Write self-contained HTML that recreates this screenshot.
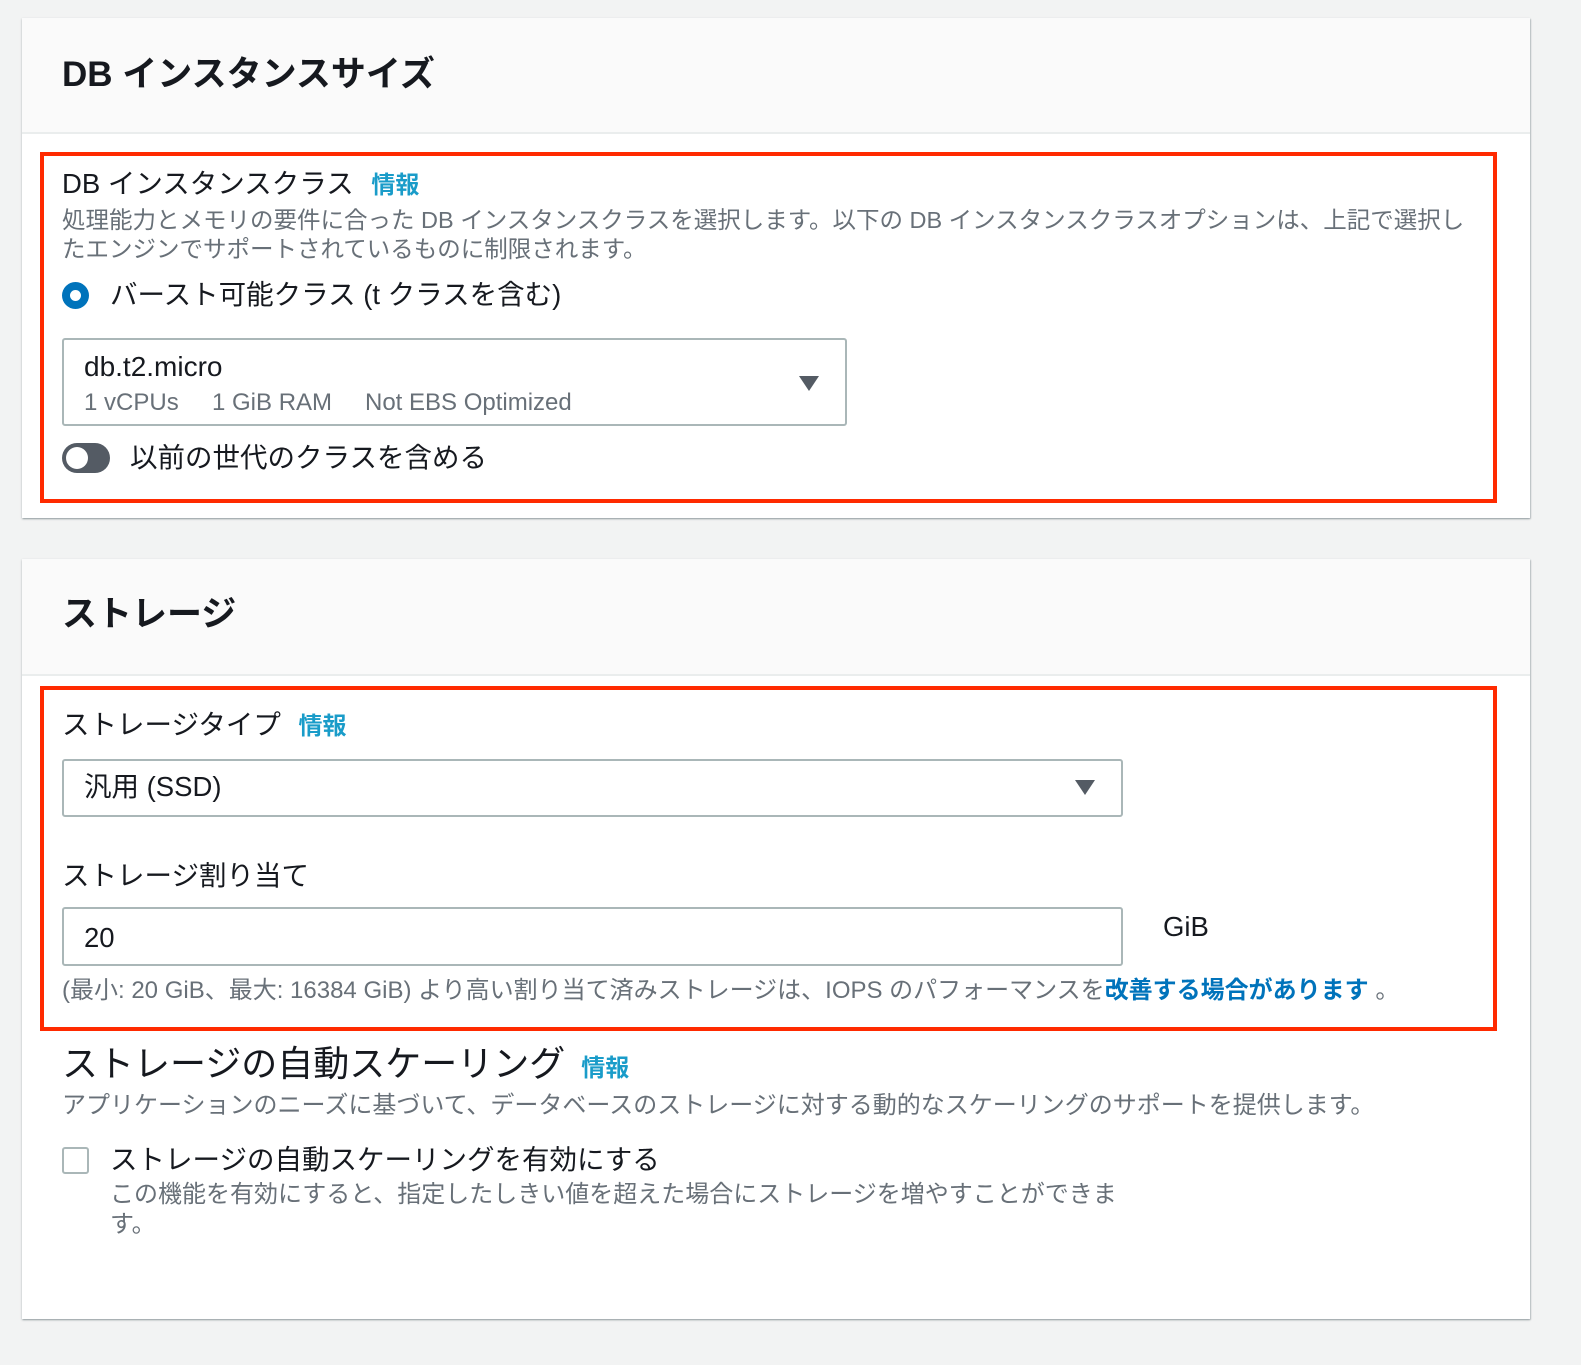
<!DOCTYPE html>
<html><head><meta charset="utf-8"><style>
*{margin:0;padding:0;box-sizing:border-box}
body{width:1581px;height:1365px;background:#f2f3f3;position:relative;overflow:hidden;font-family:"Liberation Sans","Noto Sans CJK JP",sans-serif;color:#16191f}
.abs{position:absolute;white-space:nowrap}
.panel{position:absolute;left:22px;width:1508px;background:#fff;box-shadow:0 1px 2px rgba(0,28,36,.3),1px 1px 1px rgba(0,28,36,.15)}
.hdr{position:absolute;left:0;top:0;width:100%;background:#fafafa;border-bottom:2px solid #eaeded}
.red{position:absolute;border:4px solid #ff2a00}
.h1{font-size:35px;font-weight:bold;line-height:40px}
.lbl{font-size:27.5px;line-height:32px}
.desc{font-size:24px;line-height:29px;color:#687078}
.info{color:#1a9cc9;font-weight:bold;font-size:24px}
.box{position:absolute;border:2px solid #aab7b8;border-radius:3px;background:#fff}
.tri{position:absolute;width:0;height:0;border-left:10px solid transparent;border-right:10px solid transparent;border-top:15px solid #545b64}
</style></head><body>

<div class="panel" style="top:18px;height:500px">
  <div class="hdr" style="height:116px"></div>
</div>
<div class="abs h1" style="left:62px;top:55px">DB インスタンスサイズ</div>
<div class="red" style="left:40px;top:152px;width:1457px;height:351px"></div>
<div class="abs lbl" style="left:62px;top:168px">DB インスタンスクラス <span class="info" style="margin-left:10px">情報</span></div>
<div class="abs desc" style="left:62px;top:206px;font-size:23.5px">処理能力とメモリの要件に合った DB インスタンスクラスを選択します。以下の DB インスタンスクラスオプションは、上記で選択し</div>
<div class="abs desc" style="left:62px;top:235px;font-size:23.5px">たエンジンでサポートされているものに制限されます。</div>
<div class="abs" style="left:62px;top:282px;width:27px;height:27px;border-radius:50%;background:#0073bb"></div>
<div class="abs" style="left:70px;top:290px;width:11px;height:11px;border-radius:50%;background:#fff"></div>
<div class="abs lbl" style="left:110px;top:279px">バースト可能クラス (t クラスを含む)</div>
<div class="box" style="left:62px;top:338px;width:785px;height:88px"></div>
<div class="abs" style="left:84px;top:351px;font-size:28px;line-height:32px">db.t2.micro</div>
<div class="abs desc" style="left:84px;top:388px">1 vCPUs</div>
<div class="abs desc" style="left:212px;top:388px">1 GiB RAM</div>
<div class="abs desc" style="left:365px;top:388px">Not EBS Optimized</div>
<div class="tri" style="left:799px;top:376px"></div>
<div class="abs" style="left:62px;top:443px;width:48px;height:30px;border-radius:15px;background:#545b64"></div>
<div class="abs" style="left:66px;top:447px;width:22px;height:22px;border-radius:50%;background:#fff"></div>
<div class="abs lbl" style="left:130px;top:442px">以前の世代のクラスを含める</div>

<div class="panel" style="top:559px;height:760px">
  <div class="hdr" style="height:117px"></div>
</div>
<div class="abs h1" style="left:62px;top:595px">ストレージ</div>
<div class="red" style="left:40px;top:686px;width:1457px;height:345px"></div>
<div class="abs lbl" style="left:62px;top:709px">ストレージタイプ <span class="info" style="margin-left:10px">情報</span></div>
<div class="box" style="left:62px;top:759px;width:1061px;height:58px"></div>
<div class="abs lbl" style="left:84px;top:771px">汎用 (SSD)</div>
<div class="tri" style="left:1075px;top:780px"></div>
<div class="abs lbl" style="left:62px;top:860px">ストレージ割り当て</div>
<div class="box" style="left:62px;top:907px;width:1061px;height:59px"></div>
<div class="abs lbl" style="left:84px;top:922px">20</div>
<div class="abs lbl" style="left:1163px;top:911px">GiB</div>
<div class="abs desc" style="left:62px;top:976px">(最小: 20 GiB、最大: 16384 GiB) より高い割り当て済みストレージは、IOPS のパフォーマンスを<span style="color:#0073bb;font-weight:bold">改善する場合があります</span> 。</div>

<div class="abs" style="left:62px;top:1043px;font-size:36px;line-height:42px">ストレージの自動スケーリング <span class="info" style="margin-left:6px">情報</span></div>
<div class="abs desc" style="left:62px;top:1091px">アプリケーションのニーズに基づいて、データベースのストレージに対する動的なスケーリングのサポートを提供します。</div>
<div class="abs" style="left:62px;top:1147px;width:27px;height:27px;border:2px solid #aab7b8;border-radius:3px"></div>
<div class="abs lbl" style="left:110px;top:1144px">ストレージの自動スケーリングを有効にする</div>
<div class="abs desc" style="left:110px;top:1180px">この機能を有効にすると、指定したしきい値を超えた場合にストレージを増やすことができま</div>
<div class="abs desc" style="left:110px;top:1210px">す。</div>
</body></html>
